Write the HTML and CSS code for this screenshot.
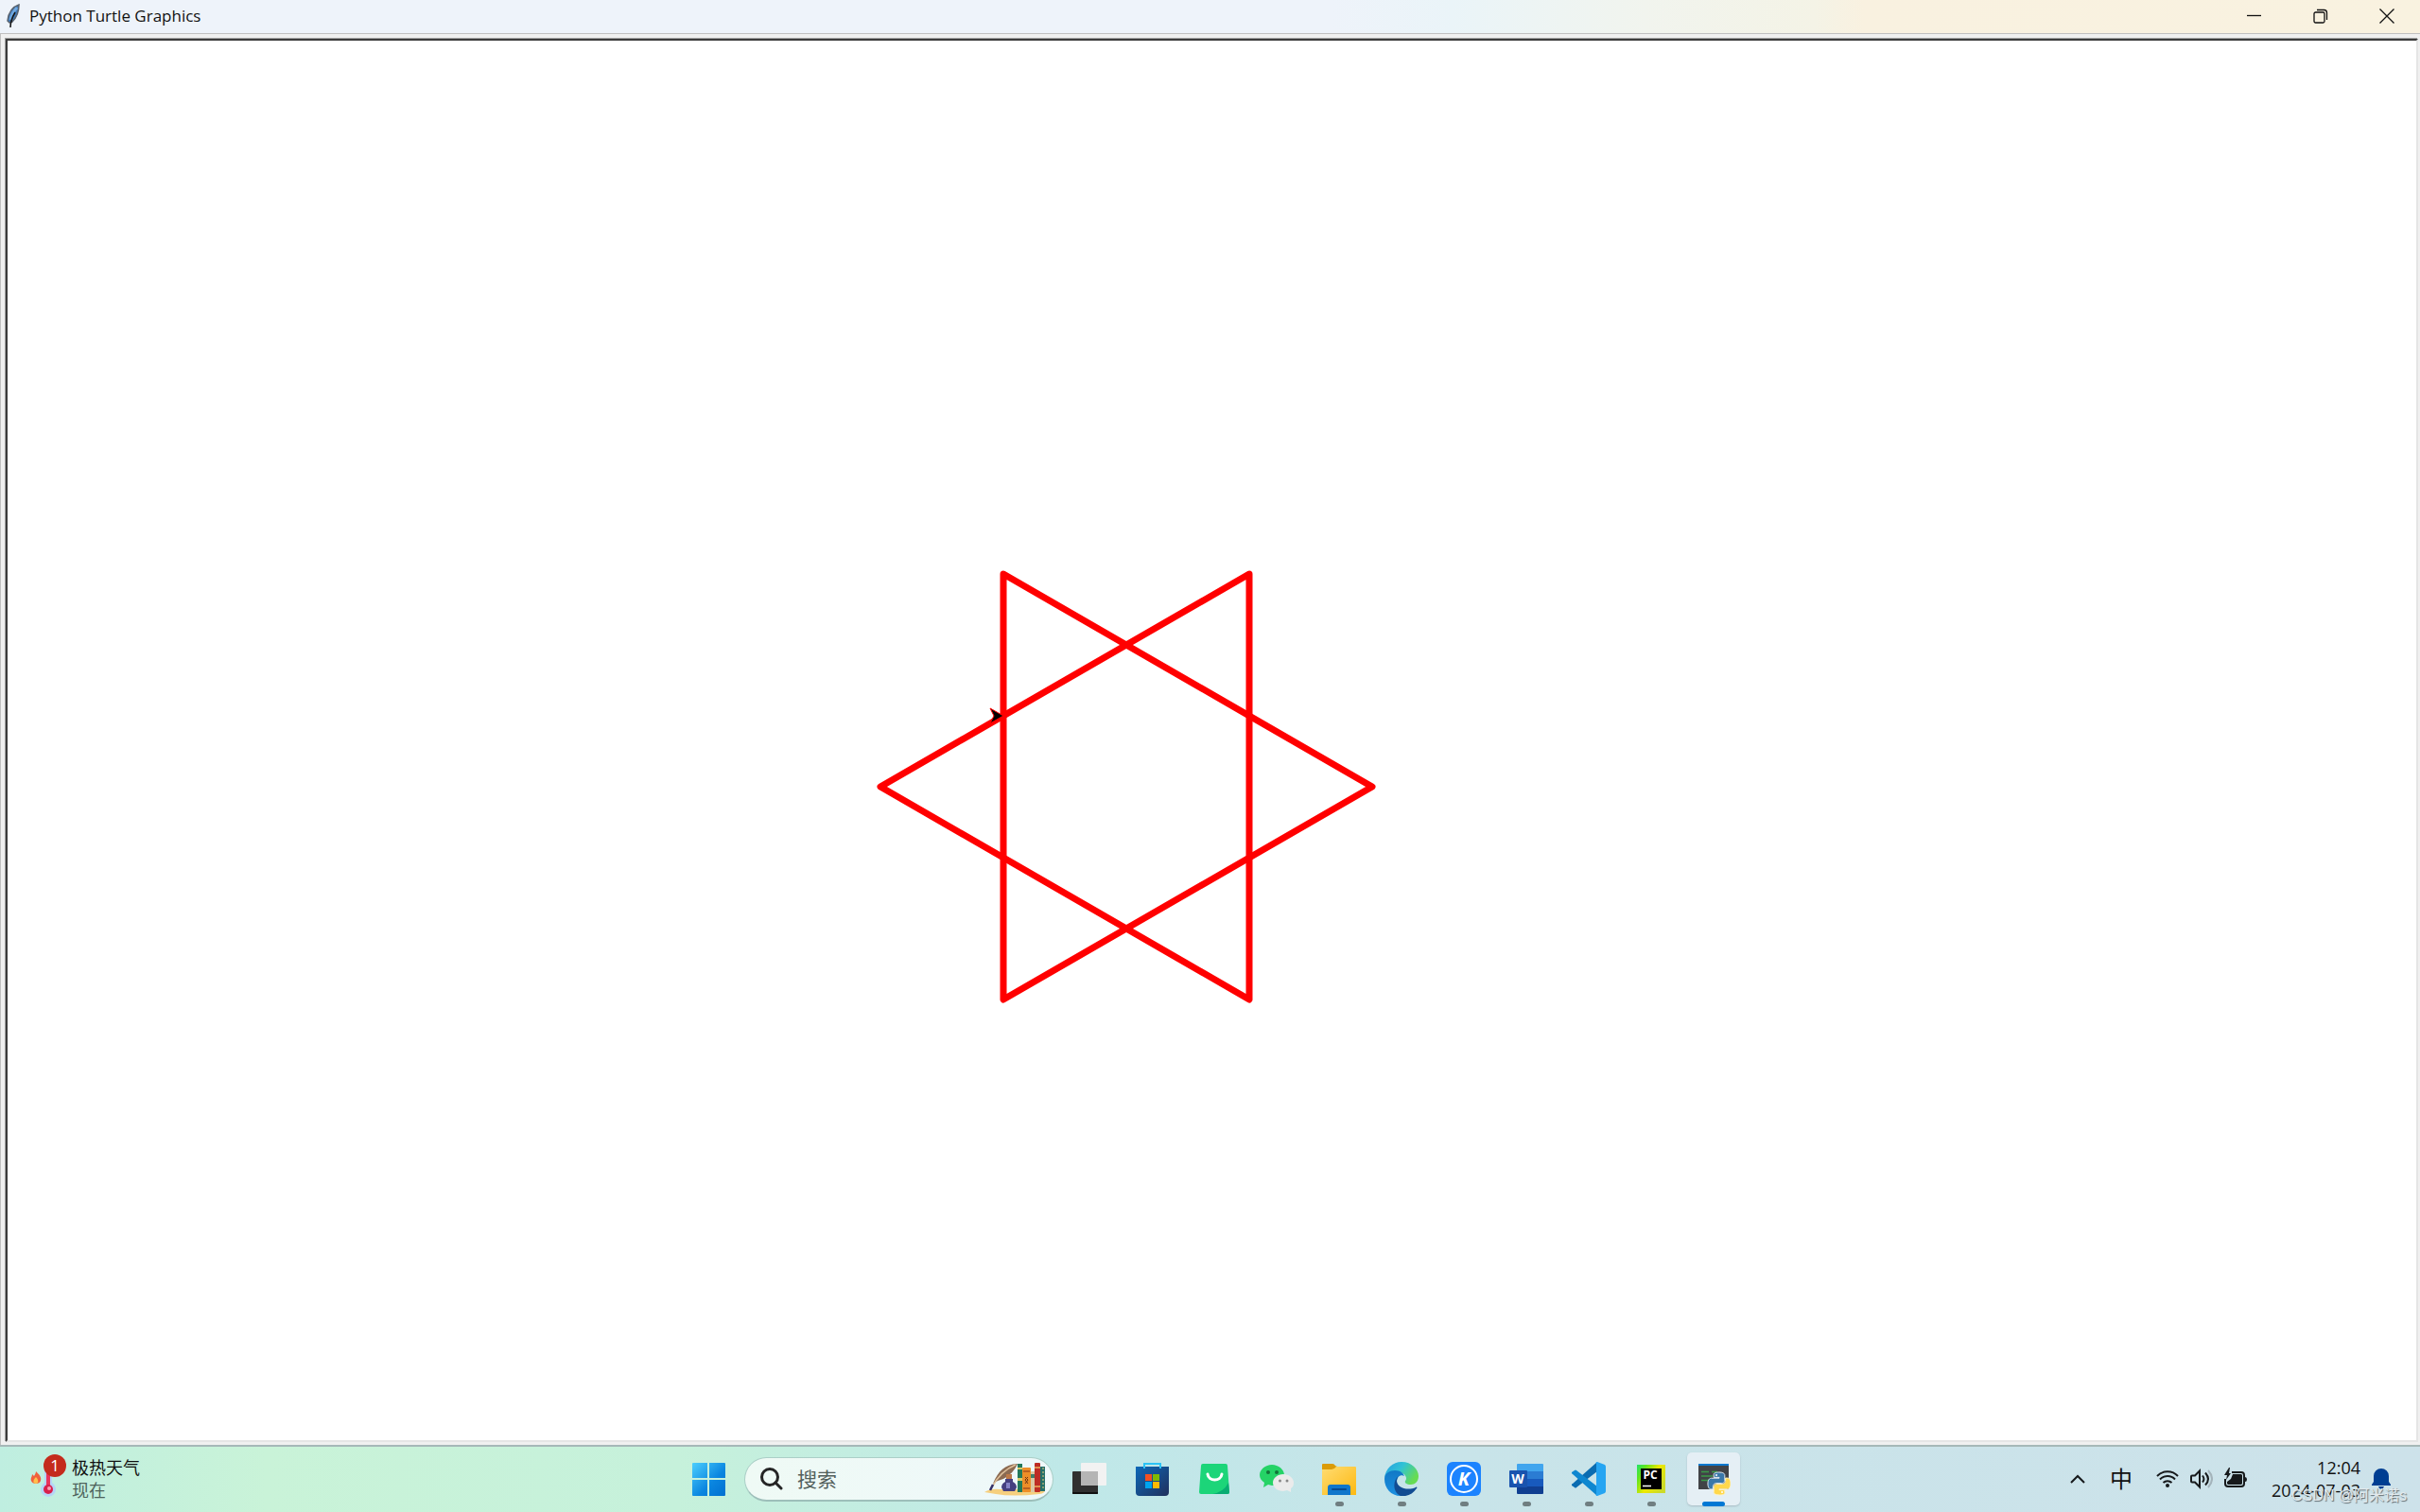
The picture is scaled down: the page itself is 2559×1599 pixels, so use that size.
FILE: index.html
```html
<!doctype html>
<html lang="zh-CN">

	<head>
		<meta charset="UTF-8">
		<title>Python Turtle Graphics</title>
		<link rel="stylesheet" href="styles.css">
	</head>

	<body>
		<div class="window">
			<header class="titlebar">
				<svg class="feather" width="16" height="26" viewBox="0 0 16 26">
					<path d="M14 1C8 3 3 9 2 18l2 2 3-1C12 14 14 8 14 1z" fill="#3f78b8" stroke="#59636f" stroke-width="1.5" />
					<path d="M12 4C8 8 6 12 5 17" fill="none" stroke="#6fa8e0" stroke-width="3" />
					<path d="M10 9C7 14 5 18 5 25" fill="none" stroke="#151515" stroke-width="1.5" />
				</svg>
				<h1>Python Turtle Graphics</h1>
				<div class="controls">
					<button type="button" aria-label="最小化">
						<svg width="16" height="16" viewBox="0 0 16 16"><path d="M0 7.5h15" /></svg>
					</button>
					<button type="button" aria-label="还原">
						<svg width="16" height="16" viewBox="0 0 16 16"><rect x="1" y="4" width="11" height="11" rx="1.5" /><path d="M4 1.5h7.500a3 3 0 0 1 3 3V12" /></svg>
					</button>
					<button type="button" aria-label="关闭">
						<svg width="16" height="16" viewBox="0 0 16 16"><path d="M.5.5l15 15M15.500.5l-15 15" /></svg>
					</button>
				</div>
			</header>
			<main class="frame">
				<!-- 六芒星画布 -->
				<svg class="canvas">
					<g class="star">
						<path d="M1313 564L923 789L1313 1014z" />
						<path d="M1053 564L1443 789L1053 1014z" />
					</g>
					<path class="turtle" d="M1053 714L1039 706L1043 714L1039 722z" />
				</svg>
			</main>
		</div>

		<footer class="taskbar">
			<button type="button" class="weather">
				<span class="weather-icon">
					<svg width="40" height="46" viewBox="0 0 40 46">
						<path d="M6 16c4 4 6 6 5 10-1 4-9 4-10 0-1-3 1-4 1-7l2 2c1-2 2-3 2-5z" fill="#f0603c" />
						<path d="M6 22c3 3 3 7 0 7s-4-3 0-7z" fill="#ffc04d" />
						<path d="M15 14h8v14a8 8 0 1 1-8 0z" fill="#b5d5f7" />
						<path d="M17 14h4v17h-4z" fill="#e8345c" />
						<circle cx="19" cy="35" r="5" fill="#d8204c" />
						<circle cx="20" cy="34" r="2" fill="#f6a0b4" />
					</svg>
					<span class="badge">1</span>
				</span>
				<span class="weather-text"><span>极热天气</span><span class="muted">现在</span></span>
			</button>

			<nav class="apps">
				<button type="button" class="app" aria-label="开始">
					<svg viewBox="0 0 36 36">
						<defs>
							<linearGradient id="win" x1="0" y1="0" x2="36" y2="36" gradientUnits="userSpaceOnUse"><stop offset="0" stop-color="#4fd2ff" /><stop offset=".6" stop-color="#0a86e0" /><stop offset="1" stop-color="#0070d0" /></linearGradient>
						</defs>
						<path d="M1 2a1 1 0 0 1 1-1h15v16H1zM19 1h16a1 1 0 0 1 1 1v15H19zM1 19h16v17H2a1 1 0 0 1-1-1zM19 19h17v16a1 1 0 0 1-1 1H19z" fill="url(#win)" />
					</svg>
				</button>
				<label class="search">
					<svg class="lens" width="24" height="24" viewBox="0 0 24 24"><circle cx="10" cy="10" r="8.500" /><path d="M16 16l6 6" /></svg>
					<input type="text" placeholder="搜索" aria-label="搜索">
					<svg width="66" height="36" viewBox="0 0 66 36">
						<path d="M1 32q7-4 16-3h48q1 4-6 5-28 3-46 0z" fill="#f6cf7e" />
						<path d="M10 23C16 9 22 3 36 2c-3 7-8 12-15 16l-6 2z" fill="#8c6b52" />
						<path d="M34 3C22 8 14 17 9 27" fill="none" stroke="#e0c19b" stroke-width="1.500" />
						<path d="M10 24l-3 6" stroke="#353168" stroke-width="2.500" />
						<path d="M24 13h6v5h-6z" fill="#bd7a48" />
						<path d="M23 18h8v3q4 2 4 6l-2 4H21l-2-4q0-4 4-6z" fill="#454080" />
						<path d="M24 22h4v6h-4z" fill="#8583c6" />
						<path d="M36 2h5v30h-5z" fill="#23795b" />
						<path d="M36 6h5v2h-5zM36 17h5v3h-5z" fill="#d8c868" />
						<rect x="41" y="6" width="9" height="26" rx="1" fill="#ed8e28" />
						<path d="M42 10h7M42 28h7" stroke="#a8521c" stroke-width="1.500" />
						<path d="M44 16l3 3-3 4m3-7l-3 3 3 4" fill="none" stroke="#6f3617" />
						<path d="M50 10h4v22h-4z" fill="#dcc7a3" /><path d="M50 13h4v4h-4z" fill="#408069" />
						<rect x="54" y="1" width="6" height="31" rx="1" fill="#bd2c25" />
						<path d="M54 6h6M54 26h6" stroke="#edb05c" stroke-width="1.500" />
						<path d="M60 5h5v26h-5z" fill="#256e68" />
						<path d="M63 6v24" stroke="#e8ca7d" stroke-dasharray="2 2" />
					</svg>
				</label>
				<button type="button" class="app" aria-label="任务视图">
					<svg viewBox="0 0 36 36">
						<rect y="10" width="27" height="24" rx="1" fill="#303030" />
						<path d="M0 32h27v1q0 1-1 1H1q-1 0-1-1z" fill="#111" />
						<rect x="9" y="1" width="27" height="24" rx="1" fill="#f2f2f2" />
						<path d="M9 10h18v15H9z" fill="#b5b5b5" />
					</svg>
				</button>
				<button type="button" class="app" aria-label="Microsoft Store">
					<svg viewBox="0 0 36 36">
						<defs><linearGradient id="store" x1="0" y1="0" x2="1" y2="1"><stop offset="0" stop-color="#0d68b8" /><stop offset="1" stop-color="#20305c" /></linearGradient></defs>
						<path d="M1 5h35v27q0 4-4 4H5q-4 0-4-4z" fill="url(#store)" />
						<path d="M10 7V2h17v5" fill="none" stroke="#2cc3f5" stroke-width="2" />
						<path d="M11 13h7v7h-7z" fill="#f25022" /><path d="M19 13h7v7h-7z" fill="#7fba00" />
						<path d="M11 21h7v7h-7z" fill="#00a4ef" /><path d="M19 21h7v7h-7z" fill="#ffb900" />
					</svg>
				</button>
				<button type="button" class="app" aria-label="应用商店">
					<svg viewBox="0 0 36 36">
						<path d="M6 2h24q2 0 2 2l2 28q0 2-2 2H4q-2 0-2-2L4 4q0-2 2-2z" fill="#1cd579" />
						<path d="M33 22l1 10q0 2-2 2H16q12-2 17-12z" fill="#08ac72" />
						<path d="M11 13c1 8 14 8 15 0" fill="none" stroke="#fff" stroke-width="3" stroke-linecap="round" />
					</svg>
				</button>
				<button type="button" class="app" aria-label="微信">
					<svg viewBox="0 0 36 36">
						<path d="M13 3c7 0 13 5 13 11s-6 11-13 11l-4-1-5 3 1-5c-3-2-5-5-5-8C0 8 6 3 13 3z" fill="#25d366" />
						<circle cx="9" cy="11" r="2" fill="#12753a" /><circle cx="18" cy="11" r="2" fill="#12753a" />
						<path d="M25 13c6 0 11 4 11 9 0 3-1 5-3 6v4l-4-2-4 1c-6 0-11-4-11-9s5-9 11-9z" fill="#ebebeb" />
						<circle cx="21.500" cy="20" r="1.500" fill="#888" /><circle cx="29" cy="20" r="1.500" fill="#888" />
					</svg>
				</button>
				<button type="button" class="app open" aria-label="文件资源管理器">
					<svg viewBox="0 0 36 36">
						<defs><linearGradient id="dir" x1="0" y1="0" x2="1" y2="1"><stop offset="0" stop-color="#ffdc72" /><stop offset="1" stop-color="#fdb912" /></linearGradient></defs>
						<path d="M0 3q0-1 1-1h10q2 0 3 2l2 1h19v5H0z" fill="#db9b08" />
						<path d="M0 8h10q3 0 5-3h20q1 0 1 1v29H0z" fill="url(#dir)" />
						<path d="M6 35V27q0-3 3-3h18q3 0 3 3v8z" fill="#0f76cb" />
						<path d="M11 29h14" stroke="#064b92" stroke-width="2" stroke-linecap="round" />
					</svg>
				</button>
				<button type="button" class="app open" aria-label="Microsoft Edge">
					<svg viewBox="0 0 36 36">
						<defs>
							<linearGradient id="edge1" x1="0" y1="0" x2="1" y2=".5"><stop offset="0" stop-color="#249ee2" /><stop offset=".5" stop-color="#31c2d5" /><stop offset="1" stop-color="#67dc52" /></linearGradient>
							<linearGradient id="edge2" x1="0" y1="0" x2="0" y2="1"><stop offset="0" stop-color="#1179c6" /><stop offset="1" stop-color="#1c8fe0" /></linearGradient>
						</defs>
						<path d="M0 17C1 7 9 0 18 0c11 0 18 8 18 15 0 6-4 9-8 9-5 0-7-2-6-4 2-2 1-6-3-8C12 8 3 10 0 17z" fill="url(#edge1)" />
						<path d="M0 18c0-6 6-9 11-9 6 0 9 3 10 6-4-2-8 1-8 6 0 7 6 13 13 12-3 2-6 3-9 3C7 36 0 28 0 18z" fill="url(#edge2)" />
						<path d="M15 15c-6 4-7 17 2 21 7 1 13-2 17-8 1-1 0-2-1-1-9 4-20 0-20-7 0-2 1-4 2-5z" fill="#124c92" />
					</svg>
				</button>
				<button type="button" class="app open" aria-label="酷狗音乐">
					<svg viewBox="0 0 36 36">
						<rect width="36" height="36" rx="6" fill="#1c83ff" />
						<circle cx="18" cy="18" r="14" fill="none" stroke="#fff" stroke-width="2" />
						<text class="glyph slanted" x="18" y="25" font-size="20">K</text>
					</svg>
				</button>
				<button type="button" class="app open" aria-label="Word">
					<svg viewBox="0 0 36 36">
						<path d="M8 3q0-1 1-1h26q1 0 1 1v7H8z" fill="#41a5ee" />
						<path d="M8 10h28v8H8z" fill="#2b7cd3" />
						<path d="M8 18h28v8H8z" fill="#185abd" />
						<path d="M8 26h28v7q0 1-1 1H9q-1 0-1-1z" fill="#103f91" />
						<rect y="9" width="19" height="18" rx="1" fill="#1953ae" />
						<text class="glyph" x="9" y="23" font-size="14">W</text>
					</svg>
				</button>
				<button type="button" class="app open" aria-label="Visual Studio Code">
					<svg viewBox="0 0 36 36">
						<path d="M27 0L1 23q-2 1-1 2l3 2q1 1 2 0l22-17z" fill="#0a6cb1" />
						<path d="M3 9L0 11q-1 1 1 2l26 23V26L5 9q-1-1-2 0z" fill="#0e87d0" />
						<path d="M27 0l8 3q1 1 1 2v26q0 1-1 2l-8 3q-2 0-1-2V2q-1-2 1-2z" fill="#26a5f2" />
					</svg>
				</button>
				<button type="button" class="app open" aria-label="PyCharm">
					<svg viewBox="0 0 36 36">
						<defs><linearGradient id="pc" x1="0" y1="0" x2="1" y2=".6"><stop offset="0" stop-color="#20e26b" /><stop offset=".25" stop-color="#62e51c" /><stop offset=".6" stop-color="#eee800" /><stop offset="1" stop-color="#cddb28" /></linearGradient></defs>
						<path d="M3 3h30v30H3z" fill="url(#pc)" />
						<path d="M7 7h22v22H7z" fill="#000" />
						<text class="glyph" x="17" y="18" font-size="12">PC</text>
						<path d="M9 25.500h9" stroke="#fff" stroke-width="1.500" />
					</svg>
				</button>
				<button type="button" class="app open active" aria-label="Python">
					<svg viewBox="0 0 36 36">
						<path d="M2 2h32v27H2z" fill="#414347" />
						<path d="M2 2h32v2H2z" fill="#0b78cf" />
						<path d="M5 10.500h8M5 15h12M5 19.500h8M16 10.500h6" stroke="#3b9a48" stroke-width="1.500" />
						<defs>
							<path id="snake" d="M14.250.18l.9.2.73.26.59.3.45.32.34.34.25.34.16.33.1.3.04.26.02.2-.01.13V8.500l-.05.63-.13.55-.21.46-.26.38-.3.31-.33.25-.35.19-.35.14-.33.1-.3.07-.26.04-.21.02H8.770l-.69.05-.59.14-.5.22-.41.27-.33.32-.27.35-.2.36-.15.37-.1.35-.07.32-.04.27-.02.21v3.060H3.170l-.21-.03-.28-.07-.32-.12-.35-.18-.36-.26-.36-.36-.35-.46-.32-.59-.28-.73-.21-.88-.14-1.050-.05-1.230.06-1.220.16-1.040.24-.87.32-.71.36-.57.4-.44.42-.33.42-.24.4-.16.36-.1.32-.05.24-.01h8.380v-.83H6.180l-.01-2.750-.02-.37.05-.34.11-.31.17-.28.25-.26.31-.23.38-.2.44-.18.51-.15.58-.12.64-.1.71-.06.77-.04.84-.02z" />
						</defs>
						<g transform="translate(12 11)">
							<use href="#snake" fill="#3b78a9" stroke="#e5eef5" />
							<use href="#snake" transform="rotate(180 12 12)" fill="#ffd84c" stroke="#fff4c8" />
							<circle cx="9" cy="3" r="1" fill="#fff" /><circle cx="15" cy="21" r="1" fill="#fff" />
						</g>
					</svg>
				</button>
			</nav>

			<div class="tray">
				<button type="button" class="chevron" aria-label="显示隐藏的图标">
					<svg width="16" height="10" viewBox="0 0 16 10"><path d="M1 9l7-7 7 7" /></svg>
				</button>
				<button type="button" class="ime">中</button>
				<button type="button" class="status" aria-label="网络、音量和电池">
					<svg width="24" height="24" viewBox="0 0 24 24">
						<path d="M1 9a15 15 0 0 1 22 0M4 12.500a11 11 0 0 1 16 0M7.500 16a6.500 6.500 0 0 1 9 0" />
						<circle class="solid" cx="12" cy="19" r="2" />
					</svg>
					<svg width="24" height="24" viewBox="0 0 24 24">
						<path d="M1 9.500q0-1 1-1h3l5-5v17l-5-5H2q-1 0-1-1zM13 8.500q3 4 0 7M16 5.500q6 7 0 13" />
						<path class="faint" d="M19 3q8 9 0 18" />
					</svg>
					<svg width="24" height="24" viewBox="0 0 24 24">
						<path d="M1 12v5q0 3 3 3h14q3 0 3-3V8q0-3-3-3H8" />
						<path class="solid" d="M9 7h9l1 1v9l-1 1H4l-1-1v-2l4-3zM22 10q2 0 2 2.500T22 15z" />
						<path class="solid" d="M5 0L0 8h3l-1 5 5-7H5l1-6z" />
					</svg>
				</button>
				<button type="button" class="clock"><time>12:04</time><time>2024-07-03</time></button>
				<button type="button" class="bell" aria-label="通知">
					<svg width="20" height="24" viewBox="0 0 20 24"><path d="M2 9a8 8 0 0 1 16 0v6l2 3v1H0v-1l2-3zM7 20h6q-1 3-3 3t-3-3z" fill="#003e92" /></svg>
				</button>
			</div>
			<span class="watermark">CSDN @阿米诺s</span>
		</footer>
	</body>

</html>
```
FILE: styles.css
```css
* {
	box-sizing: border-box;
}

body {
	margin: 0;
	height: 100vh;
	display: flex;
	flex-direction: column;
	overflow: hidden;
	font-family: "Open Sans", "Noto Sans CJK SC", sans-serif;
	font-size: 18px;
	color: #111;
}

button {
	border: 0;
	padding: 0;
	background: none;
	font: inherit;
	color: inherit;
}

svg {
	display: block;
	flex: none;
}

.window {
	flex: 1;
	min-height: 0;
	display: flex;
	flex-direction: column;
}

/* 标题栏 */
.titlebar {
	height: 35px;
	display: flex;
	align-items: center;
	padding: 0 0 2px 6px;
	background: linear-gradient(90deg, #eef3fa 0%, #eef3fa 55%, #eaf4f8 60%, #f1f4ee 68%, #f4f3e6 75%, #f9f1e0 77%, #f9f2e0 100%);
}

.titlebar h1 {
	margin: 0 auto 0 9px;
	font-size: 17px;
	line-height: 24px;
	font-weight: 400;
}

.controls {
	display: flex;
	height: 100%;
}

.controls button {
	width: 70px;
	display: flex;
	align-items: center;
	justify-content: center;
}

.controls svg {
	fill: none;
	stroke: #111;
	stroke-width: 1.3;
}

.frame {
	flex: 1;
	min-height: 0;
	display: flex;
	padding: 5px 2px 3px 5px;
	border-top: 1px solid #c0c0c0;
	border-left: 1px solid #c0c0c0;
	background: #f0f0f0;
}

.canvas {
	flex: 1;
	background: #fff;
	border: 2px solid #e5e5e5;
	border-top-color: #3c3c3c;
	border-left-color: #3c3c3c;
	box-shadow: -1px -1px 0 #a0a0a0;
}

.star {
	fill: none;
	stroke: #f00;
	stroke-width: 7;
	stroke-linejoin: round;
}

.turtle {
	fill: #000;
	stroke: #f00;
	stroke-width: 1;
}

/* 任务栏 */
.taskbar {
	position: relative;
	height: 71px;
	display: grid;
	grid-template-columns: 1fr auto 1fr;
	align-items: center;
	padding-bottom: 1px;
	border-top: 2px solid #a6b8b8;
	background: linear-gradient(90deg, #bfeee0 0%, #c9f3d8 11%, #c6f1db 28%, #bfe8e8 44%, #c8e4e9 60%, #cde2ea 100%);
}

.weather {
	justify-self: start;
	display: flex;
	gap: 4px;
	padding-left: 32px;
	text-align: left;
}

.weather-icon {
	position: relative;
}

.badge {
	position: absolute;
	top: -2px;
	left: 14px;
	width: 24px;
	height: 24px;
	border-radius: 50%;
	background: #c42b1c;
	color: #fff;
	font-size: 17px;
	line-height: 24px;
	text-align: center;
}

.weather-text {
	display: grid;
	line-height: 24px;
}

.muted {
	color: #4e645c;
}

.apps {
	display: flex;
	align-items: center;
	gap: 10px;
	padding-left: 2px;
}

.app {
	position: relative;
	width: 56px;
	height: 56px;
	display: grid;
	place-items: center;
	border-radius: 5px;
}

.app svg {
	width: 36px;
	height: 36px;
}

.open::after {
	content: "";
	position: absolute;
	bottom: -1px;
	left: 50%;
	width: 9px;
	height: 5px;
	margin-left: -4px;
	border-radius: 3px;
	background: #707e81;
}

.active {
	background: #e5eff5;
	box-shadow: 0 1px 2px #a9bcc4;
}

.active::after {
	width: 24px;
	margin-left: -12px;
	background: #0078d4;
}

.glyph {
	fill: #fff;
	font-family: "Open Sans", sans-serif;
	font-weight: 700;
	text-anchor: middle;
}

.slanted {
	font-style: italic;
}

.search {
	width: 327px;
	height: 47px;
	display: flex;
	align-items: center;
	gap: 15px;
	padding: 0 7px 0 16px;
	border: 1px solid #abcfc7;
	border-bottom: 2px solid #9dbfba;
	border-radius: 24px;
	background: linear-gradient(90deg, #effaf5, #eef8fa);
}

.search input {
	flex: 1;
	min-width: 0;
	padding: 0;
	border: 0;
	outline: 0;
	background: none;
	font: inherit;
	font-size: 21px;
}

.search input::placeholder {
	color: #53605c;
}

.lens {
	fill: none;
	stroke: #252525;
	stroke-width: 3;
	stroke-linecap: round;
}

.tray {
	justify-self: end;
	display: flex;
	align-items: center;
	padding-right: 31px;
}

.tray svg {
	fill: none;
	stroke: #16191b;
	stroke-width: 2;
}

.tray .solid {
	fill: #16191b;
	stroke: none;
}

.tray .faint {
	stroke: #a4b4bb;
}

.ime {
	margin: 0 25px 0 26px;
	font-size: 24px;
	line-height: 24px;
}

.status {
	display: flex;
	gap: 12px;
	margin-right: 26px;
}

.clock {
	display: grid;
	margin-right: 12px;
	line-height: 24px;
	text-align: right;
}

.tray .bell svg {
	stroke: none;
}

.watermark {
	position: absolute;
	right: 14px;
	bottom: 5px;
	font-family: "Liberation Sans", "Noto Sans CJK SC", sans-serif;
	font-size: 16px;
	line-height: 24px;
	color: #e3eaed;
	text-shadow: 1px 1px 1px #606b70;
}
```
